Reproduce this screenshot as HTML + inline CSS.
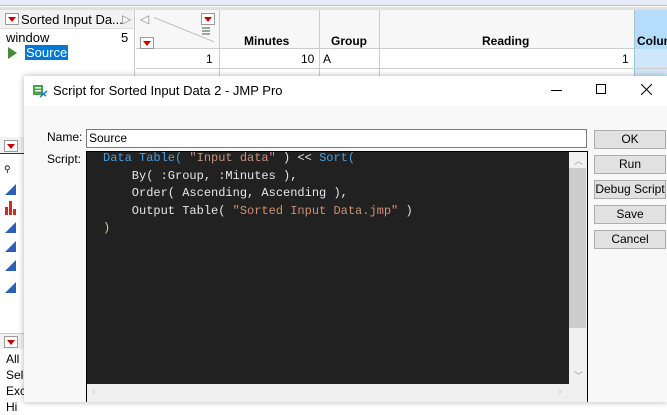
<!DOCTYPE html>
<html><head><style>
*{margin:0;padding:0;box-sizing:border-box}
body{width:667px;height:402px;overflow:hidden;position:relative;background:#fff;font-family:"Liberation Sans",sans-serif;font-size:12px;color:#000}
.a{position:absolute}
.tri{display:inline-block;width:0;height:0;border-left:4px solid transparent;border-right:4px solid transparent;border-top:5px solid #c00}
.rb{position:absolute;width:14px;height:12px;border:1px solid #999;background:#fff;display:flex;align-items:center;justify-content:center}
.btn{position:absolute;left:594px;width:72px;height:19px;background:#e1e1e1;border:1px solid #adadad;text-align:center;font-size:12px;line-height:17px}
.code{font-family:"Liberation Mono",monospace;font-size:12px;line-height:17.5px;color:#e6e6e6;white-space:pre}
.k{color:#4e9fe0}.s{color:#ce9178}.p{color:#e8c08a}
</style></head><body>
<div class="a" style="left:0;top:0;width:667px;height:6px;background:#e8ecf6;border-bottom:1px solid #b8bce0"></div>
<div class="a" style="left:0;top:7px;width:667px;height:3px;background:#e0e0e0"></div>
<div class="a" style="left:0;top:10px;width:135px;height:392px;background:#fff;border-right:1px solid #ccc"></div>
<div class="a" style="left:0;top:10px;width:134px;height:19px;background:#f2f2f2;border-bottom:1px solid #ddd"></div>
<div class="rb" style="left:5px;top:13px"><span class="tri"></span></div>
<div class="a" style="left:21px;top:12px;font-size:13px">Sorted Input Da...</div>
<div class="a" style="left:122px;top:12px;color:#888;font-size:12px">▷</div>
<div class="a" style="left:6px;top:30px;font-size:13px">window</div>
<div class="a" style="left:121px;top:30px;font-size:13px">5</div>
<div class="a" style="left:8px;top:47px;width:0;height:0;border-top:6px solid transparent;border-bottom:6px solid transparent;border-left:9px solid #4a8a3a"></div>
<div class="a" style="left:25px;top:45px;background:#0078d7;color:#fff;font-size:13px;padding:0 1px;line-height:15px">Source</div>
<div class="a" style="left:135px;top:10px;width:85px;height:392px;background:#fff;border-right:1px solid #ccc"></div>
<div class="a" style="left:0;top:137px;width:24px;height:16px;background:#f2f2f2"></div>
<div class="rb" style="left:4px;top:140px"><span class="tri"></span></div>
<div class="a" style="left:0;top:153px;width:24px;height:1px;background:#333"></div>
<div class="a" style="left:4px;top:164px;font-size:9px">⚲</div>
<svg class="a" style="left:4px;top:183px" width="20" height="100">
<polygon points="1,12 12,1 12,12" fill="#2d5fb8"/>
<rect x="1" y="24" width="3" height="8" fill="#c8301a"/><rect x="5" y="18" width="3" height="14" fill="#c8301a"/><rect x="9" y="26" width="3" height="6" fill="#c8301a"/>
<polygon points="1,50 12,39 12,50" fill="#2d5fb8"/>
<polygon points="1,69 12,58 12,69" fill="#2d5fb8"/>
<polygon points="1,88 12,77 12,88" fill="#2d5fb8"/>
</svg>
<div class="a" style="left:4px;top:281px"><svg width="14" height="14"><polygon points="1,12 12,1 12,12" fill="#2d5fb8"/></svg></div>
<div class="a" style="left:0;top:333px;width:24px;height:16px;background:#f2f2f2;border-top:1px solid #ccc"></div>
<div class="rb" style="left:4px;top:336px"><span class="tri"></span></div>
<div class="a" style="left:6px;top:351px;font-size:12px;line-height:16px">All<br>Sele<br>Exc<br>Hi</div>
<div class="a" style="left:136px;top:10px;width:531px;height:39px;background:#f7f7f7;border-bottom:1px solid #ccc"></div>
<div class="a" style="left:219px;top:10px;width:1px;height:66px;background:#ccc"></div>
<div class="a" style="left:319px;top:10px;width:1px;height:66px;background:#ccc"></div>
<div class="a" style="left:379px;top:10px;width:1px;height:66px;background:#ccc"></div>
<div class="a" style="left:634px;top:10px;width:33px;height:66px;background:#cfe6fb"></div>
<div class="a" style="left:634px;top:10px;width:33px;height:39px;background:#b3dcfd"></div>
<div class="a" style="left:634px;top:10px;width:1px;height:66px;background:#9cc"></div>
<div class="a" style="left:140px;top:12px;color:#888;font-size:12px">◁</div>
<div class="rb" style="left:201px;top:13px"><span class="tri"></span></div>
<div class="rb" style="left:140px;top:37px"><span class="tri"></span></div>
<div class="a" style="left:154px;top:17px;width:65px;height:1px;background:#bbb;transform:rotate(22deg);transform-origin:0 0"></div>
<div class="a" style="left:202px;top:27px;width:8px;height:2px;background:#9a9;box-shadow:0 3px #9a9,0 6px #9a9"></div>
<div class="a" style="left:244px;top:34px;font-weight:bold">Minutes</div>
<div class="a" style="left:331px;top:34px;font-weight:bold">Group</div>
<div class="a" style="left:482px;top:34px;font-weight:bold">Reading</div>
<div class="a" style="left:637px;top:34px;font-weight:bold">Colum</div>
<div class="a" style="left:136px;top:68px;width:531px;height:1px;background:#ccc"></div>
<div class="a" style="left:206px;top:52px">1</div>
<div class="a" style="left:301px;top:52px">10</div>
<div class="a" style="left:323px;top:52px">A</div>
<div class="a" style="left:622px;top:52px">1</div>
<div class="a" style="left:24px;top:76px;width:643px;height:326px;background:#f8f8f8;box-shadow:0 0 6px rgba(0,0,0,.3)"></div>
<div class="a" style="left:24px;top:76px;width:643px;height:30px;background:#fff"></div>
<svg class="a" style="left:32px;top:83px" width="16" height="16"><rect x="1" y="2" width="10" height="10" fill="#4aa04a"/><rect x="3" y="4" width="6" height="1.5" fill="#fff"/><rect x="3" y="7" width="6" height="1.5" fill="#fff"/><path d="M8 14 L15 8 M9 9 L14 13" stroke="#2a7ad0" stroke-width="1.5"/></svg>
<div class="a" style="left:53px;top:83px;font-size:13px">Script for Sorted Input Data 2 - JMP Pro</div>
<div class="a" style="left:551px;top:90px;width:11px;height:1px;background:#000"></div>
<div class="a" style="left:596px;top:84px;width:10px;height:10px;border:1px solid #000"></div>
<svg class="a" style="left:641px;top:84px" width="11" height="11"><path d="M0 0L11 11M11 0L0 11" stroke="#000" stroke-width="1"/></svg>
<div class="a" style="left:47px;top:130px">Name:</div>
<div class="a" style="left:86px;top:129px;width:501px;height:19px;background:#fff;border:1px solid #7a7a7a;padding-left:2px;line-height:17px">Source</div>
<div class="a" style="left:47px;top:152px">Script:</div>
<div class="a" style="left:86px;top:151px;width:502px;height:251px;background:#212121;border:1px solid #000;border-bottom:none"></div>
<div class="a code" style="left:103px;top:150px"><span class="k">Data Table(</span> <span class="s">"Input data"</span> ) &lt;&lt; <span class="k">Sort(</span>
    By( :Group, :Minutes ),
    Order( Ascending, Ascending ),
    Output Table( <span class="s">"Sorted Input Data.jmp"</span> )
<span class="p">)</span></div>
<div class="a" style="left:569px;top:152px;width:18px;height:250px;background:#f0f0f0"></div>
<div class="a" style="left:569px;top:168px;width:17px;height:160px;background:#cdcdcd"></div>
<div class="a" style="left:574px;top:154px;color:#999;font-size:9px">︿</div>
<div class="a" style="left:574px;top:369px;color:#999;font-size:9px">﹀</div>
<div class="a" style="left:87px;top:384px;width:482px;height:18px;background:#f0f0f0"></div>
<div class="a" style="left:92px;top:386px;color:#ccc;font-size:11px">‹</div>
<div class="a" style="left:558px;top:386px;color:#ccc;font-size:11px">›</div>
<div class="btn" style="top:130px">OK</div>
<div class="btn" style="top:155px">Run</div>
<div class="btn" style="top:180px">Debug Script</div>
<div class="btn" style="top:205px">Save</div>
<div class="btn" style="top:230px">Cancel</div>
</body></html>
